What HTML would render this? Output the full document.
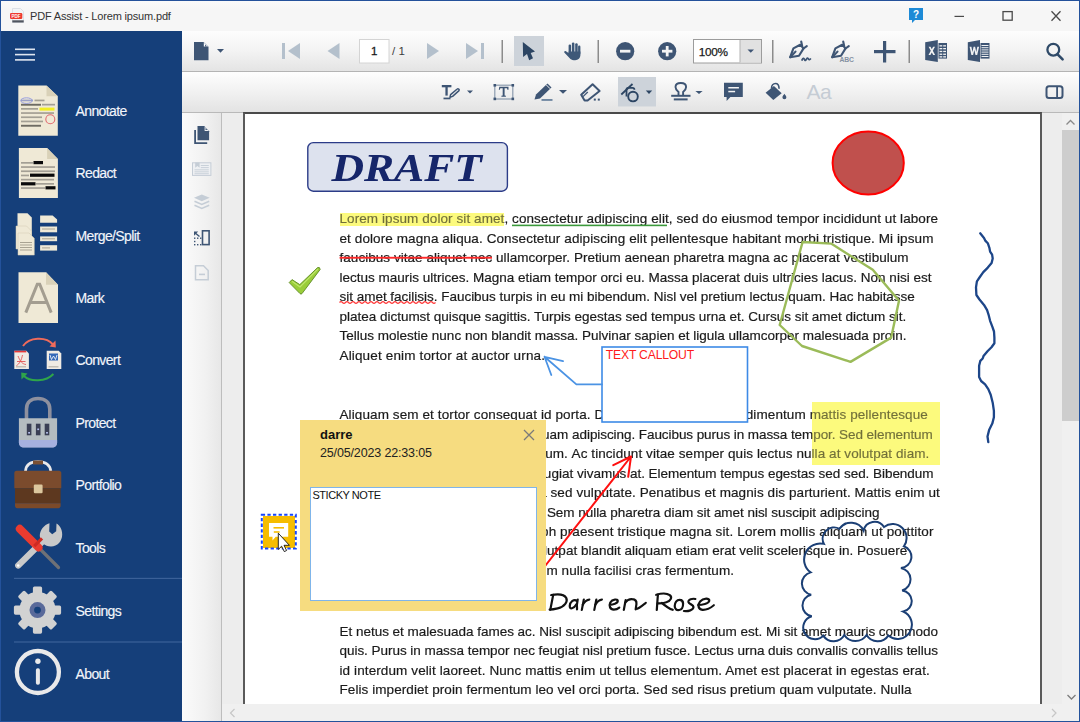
<!DOCTYPE html>
<html><head><meta charset="utf-8">
<style>
*{margin:0;padding:0;box-sizing:border-box}
html,body{width:1080px;height:722px;overflow:hidden;background:#fff;font-family:"Liberation Sans",sans-serif}
.a{position:absolute}
.tl{position:absolute;white-space:nowrap;font-size:13.5px;line-height:13.5px;color:#1a1a1a;-webkit-text-stroke:0.2px #1e1e1e}
.side{position:absolute;left:1px;top:31px;width:181px;height:690px;background:#153f7a}
.stx{position:absolute;left:75.5px;color:#f2f5fa;font-size:14px;line-height:14px;letter-spacing:-0.62px;white-space:nowrap;-webkit-text-stroke:0.15px #f2f5fa}
.tb1{position:absolute;left:182px;top:31px;width:897px;height:41px;background:linear-gradient(#fdfdfd,#f3f3f3 50%,#e4e4e4);border-bottom:1px solid #b4b4b4}
.tb2{position:absolute;left:182px;top:72px;width:897px;height:41px;background:linear-gradient(#fefefe,#f1f1f1 50%,#e3e3e3);border-bottom:1px solid #b9b9b9}
svg{position:absolute;overflow:visible}
</style></head><body>

<!-- title bar -->
<div class="a" style="left:1px;top:1px;width:1078px;height:30px;background:linear-gradient(#fafafa,#f6f6f6 30%,#f6f6f6)"></div>
<svg style="left:0;top:0" width="1080" height="31">
  <!-- app icon -->
  <path d="M12.5 8.5h8l3 3v11h-11z" fill="#f2f4f6" stroke="#d5dbe2" stroke-width="0.8"/>
  <rect x="10" y="13" width="12.3" height="6" rx="1.2" fill="#ee3b30"/>
  <text x="16" y="17.8" font-size="4.5" font-weight="bold" fill="#fff" text-anchor="middle" font-family="Liberation Sans">PDF</text>
  <rect x="12.3" y="20.3" width="11.4" height="2.2" fill="#50555f"/>
  <!-- help -->
  <path d="M909 8h14v12h-8l-3 3v-3h-3z" fill="#1d8ad6"/>
  <text x="916" y="18" font-size="10" font-weight="bold" fill="#fff" text-anchor="middle" font-family="Liberation Sans">?</text>
  <!-- minimize -->
  <rect x="954.5" y="15.8" width="9.5" height="1.2" fill="#4a4a4a"/>
  <!-- maximize -->
  <rect x="1003" y="11.6" width="9.2" height="8.6" fill="none" stroke="#4a4a4a" stroke-width="1.3"/>
  <!-- close -->
  <path d="M1051.5 11.3l9 9.5M1060.5 11.3l-9 9.5" stroke="#4a4a4a" stroke-width="1.3"/>
</svg>
<div class="a" style="left:30px;top:10.9px;font-size:11px;line-height:11px;color:#333;white-space:nowrap;letter-spacing:-0.17px">PDF Assist - Lorem ipsum.pdf</div>

<!-- sidebar -->
<div class="side"></div>
<svg style="left:0;top:0" width="182" height="722">
  <rect x="15" y="48.5" width="20" height="1.6" fill="#dfe6f0"/>
  <rect x="15" y="53.8" width="20" height="1.6" fill="#dfe6f0"/>
  <rect x="15" y="59.1" width="20" height="1.6" fill="#dfe6f0"/>
  <rect x="14" y="577.8" width="168" height="1.2" fill="#3a6098"/>
  <rect x="14" y="641.4" width="168" height="1.2" fill="#3a6098"/>
</svg>
<svg style="left:0;top:0" width="182" height="722">
  <!-- Annotate doc -->
  <path d="M18.3 85.4h28.2l11.3 10.8v39.5H18.3z" fill="#efe9d6"/>
  <path d="M46.5 85.4v10.8h11.3z" fill="#d9d1b8"/>
  <g fill="#a39f94">
    <rect x="21" y="99.6" width="12" height="1.7" fill="#9aa0c8"/><rect x="34.5" y="99.6" width="10" height="1.7"/>
    <rect x="21" y="103.8" width="20" height="1.9" fill="#6e6b63"/><rect x="42" y="103.8" width="13" height="1.7"/>
    <rect x="21" y="108" width="17" height="1.7"/><rect x="39.5" y="107.6" width="15" height="3" fill="#f2ee22"/>
    <rect x="21" y="112.2" width="33" height="1.7"/>
    <rect x="21" y="116.4" width="21" height="1.7"/>
    <rect x="21" y="120.6" width="22" height="1.7"/>
    <rect x="21" y="124.8" width="20" height="1.9" fill="#6e6b63"/>
  </g>
  <ellipse cx="26.5" cy="100.6" rx="5.8" ry="2.8" fill="none" stroke="#8d95e0" stroke-width="0.9"/>
  <circle cx="50.3" cy="119.3" r="4.5" fill="none" stroke="#e06a70" stroke-width="1.1"/>

  <!-- Redact doc -->
  <path d="M18.9 148.1h28.2l10.8 11v38.9H18.9z" fill="#efe9d6"/>
  <path d="M47.1 148.1v11h10.8z" fill="#d9d1b8"/>
  <g fill="#a39f94">
    <rect x="21" y="162" width="12" height="1.7"/><rect x="33.5" y="161" width="9.5" height="3.2" fill="#0a0a0a"/>
    <rect x="21" y="166.2" width="34" height="1.7"/>
    <rect x="21" y="170.4" width="34" height="1.7"/>
    <rect x="21" y="174.6" width="8" height="1.7"/><rect x="30" y="173.6" width="24.5" height="3.2" fill="#0a0a0a"/>
    <rect x="21" y="178.8" width="33" height="1.7"/>
    <rect x="21" y="182.2" width="14.5" height="3.2" fill="#0a0a0a"/><rect x="36" y="183" width="18" height="1.7"/>
    <rect x="21" y="187.2" width="24" height="1.7"/><rect x="45.5" y="186.2" width="10" height="3.2" fill="#0a0a0a"/>
  </g>

  <!-- Merge/Split -->
  <g fill="#efe9d6">
    <path d="M17.5 213.2h10l4.3 4.3v22H17.5z"/>
    <path d="M16 226h10.5l5 5v18H16z" stroke="#d0c8b0" stroke-width="0.5"/>
    <path d="M18 233h11l5.3 5.3v16.8H18z" stroke="#d0c8b0" stroke-width="0.5"/>
    <path d="M40.1 215.6h12.5l4.5 4v3.1h-17z"/>
    <rect x="40.1" y="226.5" width="17" height="5.8"/>
    <rect x="40.1" y="236.4" width="17" height="4.8"/>
    <rect x="40.1" y="245.2" width="17" height="5.4"/>
  </g>
  <g fill="#a9a393">
    <rect x="20" y="242" width="12" height="1"/><rect x="20" y="244.5" width="12" height="1"/>
    <rect x="20" y="247" width="12" height="1"/><rect x="20" y="249.5" width="12" height="1"/>
    <rect x="42" y="228.5" width="13" height="1"/><rect x="42" y="238.3" width="13" height="1"/>
    <rect x="42" y="247.4" width="8" height="1"/>
  </g>

  <!-- Mark -->
  <path d="M18.5 272.2h27.5l12 12.5v38.3H18.5z" fill="#efe9d6"/>
  <path d="M46 272.2v12.5h12z" fill="#d9d1b8"/>
  <path d="M25.8 312.6L37.3 284.3h2.4l11.5 28.3M29.8 302.6h17.4" fill="none" stroke="#a39d90" stroke-width="3"/>

  <!-- Convert -->
  <path d="M14.3 350.8h12l2.6 2.6v15.6H14.3z" fill="#f0ebe4"/>
  <rect x="14.3" y="350.8" width="12" height="1.6" fill="#e63a3a"/>
  <path d="M18 356c2 5 4 8 8 8.5M22.5 355c-1 5-3 9-6 10.5M17 361.5h8.5" fill="none" stroke="#e25555" stroke-width="0.9"/>
  <rect x="16" y="366.2" width="10" height="1.2" fill="#b9b3aa"/>
  <path d="M46.7 350.8h12l2.6 2.6v15.6H46.7z" fill="#f0ebe4"/>
  <rect x="49" y="353.5" width="9" height="7" fill="#3569b8"/>
  <path d="M50 355l1.5 4.5 2-3.5 2 3.5 1.5-4.5" fill="none" stroke="#fff" stroke-width="0.8"/>
  <rect x="48.5" y="366.2" width="10" height="1.2" fill="#b9b3aa"/>
  <path d="M23 346C29 337 46 336 53 344.5" fill="none" stroke="#ef6b5b" stroke-width="2"/>
  <path d="M49.5 346.5L55.5 340.5L55.8 347.5z" fill="#ef6b5b"/>
  <path d="M53.4 374C46 382 30 382 24 376" fill="none" stroke="#2fa54a" stroke-width="2"/>
  <path d="M27.5 373.5L21.5 379.5L21.2 372.5z" fill="#2fa54a"/>

  <!-- Protect lock -->
  <path d="M26.5 419V409C26.5 402 31.5 398.5 38 398.5S49.8 402 49.8 409V419" fill="none" stroke="#8e909e" stroke-width="3.6"/>
  <path d="M18.9 418.3h38.2v24c0 3-2 5-5 5H23.9c-3 0-5-2-5-5z" fill="#b4bcc0"/>
  <path d="M18.9 439.9h38.2v2.5c0 3-2 5-5 5H23.9c-3 0-5-2-5-5z" fill="#a6b1df"/>
  <g fill="#3a3f55">
    <rect x="26.8" y="423.7" width="4.6" height="11.6"/>
    <rect x="35.9" y="423.7" width="4.6" height="11.6"/>
    <rect x="44.7" y="423.7" width="4.6" height="11.6"/>
  </g>
  <g fill="#b8c2f0"><rect x="28.2" y="432" width="1.8" height="1.6"/><rect x="37.3" y="428.5" width="1.8" height="1.6"/><rect x="46.1" y="432" width="1.8" height="1.6"/></g>

  <!-- Portfolio -->
  <path d="M25.5 471C26 465 30 461.6 38 461.6S50 465 50.8 471" fill="none" stroke="#e8e8ea" stroke-width="2.8"/>
  <rect x="33" y="460.5" width="10" height="4" fill="#7a5034"/>
  <path d="M14.3 473c0-1.2 1-2.2 2.2-2.2h42.6c1.2 0 2.2 1 2.2 2.2v15.2H14.3z" fill="#7b4b2d"/>
  <rect x="15" y="488.2" width="45.6" height="15" fill="#5d381f"/>
  <path d="M15 503.2h45.6v2.8c0 1.2-1 2.2-2.2 2.2H17.2c-1.2 0-2.2-1-2.2-2.2z" fill="#7c4a2a"/>
  <rect x="33.8" y="484.5" width="8.8" height="8.7" rx="1.2" fill="#dcc79e"/>

  <!-- Tools -->
  <path d="M18.2 565.5L44.5 539.5" stroke="#c9c9c9" stroke-width="6.2" stroke-linecap="round"/>
  <path d="M49.5 523.2C44 524.8 39.8 530 39.8 535.8C39.8 542 45 546.5 51 546.5C57.5 546.5 62.2 541 62.2 534.5C62.2 529.5 59.8 525.6 56.5 523.6L56.2 531.2L52.2 534.2L49.2 531.5z" fill="#c9c9c9"/>
  <circle cx="18.2" cy="565.5" r="1.3" fill="#fff"/>
  <path d="M40.5 549.5L58.5 567.5" stroke="#6f7176" stroke-width="3.2" stroke-linecap="round"/>
  <path d="M19.8 528.8L38.5 547.5" stroke="#ea3b2f" stroke-width="8" stroke-linecap="round"/>
  <path d="M34.2 546.2L42 538.4" stroke="#cf2a22" stroke-width="3.2"/>

  <!-- Settings gear -->
  <g transform="translate(37.5 610.1)" fill="#d2d2d2">
    <circle r="18.2"/>
    <rect x="-4.6" y="-23.6" width="9.2" height="9" rx="1.6" transform="rotate(0)"/><rect x="-4.6" y="-23.6" width="9.2" height="9" rx="1.6" transform="rotate(45)"/><rect x="-4.6" y="-23.6" width="9.2" height="9" rx="1.6" transform="rotate(90)"/><rect x="-4.6" y="-23.6" width="9.2" height="9" rx="1.6" transform="rotate(135)"/><rect x="-4.6" y="-23.6" width="9.2" height="9" rx="1.6" transform="rotate(180)"/><rect x="-4.6" y="-23.6" width="9.2" height="9" rx="1.6" transform="rotate(225)"/><rect x="-4.6" y="-23.6" width="9.2" height="9" rx="1.6" transform="rotate(270)"/><rect x="-4.6" y="-23.6" width="9.2" height="9" rx="1.6" transform="rotate(315)"/>
    <circle r="8" fill="#59699a"/>
    <circle r="3.4" fill="#153f7a"/>
  </g>

  <!-- About -->
  <circle cx="37.9" cy="672" r="21" fill="none" stroke="#e9e9ea" stroke-width="4.3"/>
  <circle cx="37.9" cy="661.3" r="2.7" fill="#e9e9ea"/>
  <rect x="35.9" y="668.2" width="4" height="16.6" rx="1.8" fill="#e9e9ea"/>
</svg>

<div class="stx" style="top:103.9px">Annotate</div>
<div class="stx" style="top:166.2px">Redact</div>
<div class="stx" style="top:228.6px">Merge/Split</div>
<div class="stx" style="top:291px">Mark</div>
<div class="stx" style="top:353.4px">Convert</div>
<div class="stx" style="top:415.8px">Protect</div>
<div class="stx" style="top:478.2px">Portfolio</div>
<div class="stx" style="top:540.6px">Tools</div>
<div class="stx" style="top:603.6px">Settings</div>
<div class="stx" style="top:666.6px">About</div>

<!-- toolbars -->
<div class="tb1"></div>
<div class="tb2"></div>
<svg style="left:0;top:0" width="1080" height="113">
<g fill="#3e5574" stroke="none">
  <!-- doc -->
  <path d="M194 42h9.5l5 4.8V60.2H194z"/>
  <path d="M203.8 42.4v4.2h4.2z" fill="#fff"/>
  <path d="M205 44.5l2 2h-2z" fill="#3e5574"/>
  <path d="M217 49h7l-3.5 3.8z"/>
  <!-- first/prev (disabled) -->
  <g fill="#b4c0cc">
    <rect x="282" y="43" width="3" height="16"/>
    <path d="M300 43v16l-12-8z"/>
    <path d="M339.5 43v16l-12-8z"/>
    <path d="M427 43v16l12-8z"/>
    <path d="M466 43v16l12-8z"/>
    <rect x="481" y="43" width="3" height="16"/>
  </g>
  <!-- separators -->
  <rect x="501.5" y="40" width="1.5" height="23" fill="#8c8c8c"/>
  <rect x="597.5" y="40" width="1.5" height="23" fill="#8c8c8c"/>
  <rect x="772" y="40" width="1.5" height="23" fill="#8c8c8c"/>
  <rect x="908.5" y="40" width="1.5" height="23" fill="#8c8c8c"/>
  <!-- select highlight -->
  <rect x="514" y="36" width="30" height="30" fill="#cdd3da"/>
  <path d="M522.8 42L523.1 57L527 54L529.2 60.2L533 58.2L530.7 53L535 51.5z" fill="#2c4563"/>
  <!-- hand -->
  <g fill="#3e5878">
    <rect x="568.6" y="44.6" width="2.5" height="10" rx="1.2"/>
    <rect x="571.9" y="42.4" width="2.5" height="11" rx="1.2"/>
    <rect x="575.2" y="43.2" width="2.5" height="11" rx="1.2"/>
    <rect x="578.1" y="45.6" width="2.3" height="9" rx="1.1"/>
    <path d="M568.6 51.5h11.8v3.5c0 3-2.2 5.2-5.2 5.2h-1.5c-1.8 0-3-.8-4.2-2.2l-5-5.2c-.9-1 .3-2.3 1.4-1.6l2.7 1.8z"/>
  </g>
  <!-- minus/plus circles -->
  <circle cx="625.2" cy="51.2" r="9.1"/>
  <rect x="620" y="49.8" width="10.4" height="2.8" fill="#f4f4f4"/>
  <circle cx="667.2" cy="51.2" r="9.1"/>
  <rect x="662" y="49.8" width="10.4" height="2.8" fill="#f4f4f4"/>
  <rect x="665.8" y="46" width="2.8" height="10.4" fill="#f4f4f4"/>
  <!-- big plus -->
  <rect x="874" y="50" width="21.5" height="3.2"/>
  <rect x="883" y="41" width="3.2" height="21.5"/>
  <!-- excel -->
  <path d="M925.2 42.3L937.8 40.1V62L925.2 60.1z"/>
  <path d="M938.5 43h8.5v15.6h-8.5z"/>
  <g fill="#f2f2f2">
    <rect x="939.5" y="45.2" width="2.8" height="1.3"/><rect x="943.2" y="45.2" width="2.8" height="1.3"/>
    <rect x="939.5" y="48" width="2.8" height="1.3"/><rect x="943.2" y="48" width="2.8" height="1.3"/>
    <rect x="939.5" y="50.8" width="2.8" height="1.3"/><rect x="943.2" y="50.8" width="2.8" height="1.3"/>
    <rect x="939.5" y="53.6" width="2.8" height="1.3"/><rect x="943.2" y="53.6" width="2.8" height="1.3"/>
    <rect x="939.5" y="56.2" width="2.8" height="1.3"/><rect x="943.2" y="56.2" width="2.8" height="1.3"/>
  </g>
  <path d="M928.6 46.8h1.9l1.3 2.5 1.3-2.5h1.9l-2.2 4 2.3 4.3h-1.9l-1.4-2.7-1.4 2.7h-1.9l2.3-4.3z" fill="#f2f2f2"/>
  <!-- word -->
  <path d="M967.8 42.3L980 40.1V62L967.8 60z"/>
  <path d="M980.5 43h9v15.6h-9z"/>
  <g fill="#eef0f2">
    <rect x="981.5" y="45" width="7" height="1"/><rect x="981.5" y="47.2" width="7" height="1"/>
    <rect x="981.5" y="49.4" width="7" height="1"/><rect x="981.5" y="51.6" width="7" height="1"/>
    <rect x="981.5" y="53.8" width="7" height="1"/><rect x="981.5" y="56" width="7" height="1"/>
  </g>
  <path d="M969.6 46.8h1.8l1 5.2 1.2-5.2h1.5l1.2 5.2 1-5.2h1.8l-1.9 8.3h-1.7l-1.2-5-1.2 5h-1.7z" fill="#eef0f2"/>
  <!-- search -->
  <circle cx="1053.3" cy="49.7" r="5.9" fill="none" stroke="#2f4a68" stroke-width="2.3"/>
  <path d="M1057.6 54.3l5 5" stroke="#2f4a68" stroke-width="2.6" stroke-linecap="round"/>
</g>
<!-- page box -->
<rect x="359.5" y="39.5" width="29.5" height="23.5" fill="#fff" stroke="#d4d4d4"/>
<text x="374.2" y="55.2" font-size="11.5" fill="#1a1a1a" text-anchor="middle" font-family="Liberation Sans" stroke="#1a1a1a" stroke-width="0.3">1</text>
<text x="392" y="55.2" font-size="11.5" fill="#3c3c3c" font-family="Liberation Sans">/ 1</text>
<!-- zoom combo -->
<rect x="693.5" y="39.5" width="68" height="23.5" fill="#fff" stroke="#9c9c9c"/>
<rect x="740" y="40" width="21" height="22.5" fill="#e1e1e1"/>
<rect x="739.5" y="40" width="1" height="22.5" fill="#b4b4b4"/>
<path d="M747.5 49.5h6.5l-3.25 3.3z" fill="#3e5574"/>
<text x="698.8" y="55.6" font-size="11.8" fill="#1a1a1a" font-family="Liberation Sans" letter-spacing="-0.3" stroke="#1a1a1a" stroke-width="0.25">100%</text>
<!-- pen sign 1 -->
<g fill="none" stroke="#3e5574" stroke-width="2.1" stroke-linejoin="round" stroke-linecap="round">
  <path d="M790.2 57.2L793.4 48.4L800.2 44.8L803.6 48.4L799 55.8z"/>
  <path d="M790.2 57.2L795.5 51.6"/>
  <path d="M801.2 41.5L802.2 46.2M806.8 46.2L802.8 49"/>
  <path d="M802 60c1-2 2-2 2.5-.5s1.5 1 2-.5 1.5-1 2 0 1.5.5 2 0" stroke-width="1.7"/>
  <path d="M832.2 57.2L835.4 48.4L842.2 44.8L845.6 48.4L841 55.8z"/>
  <path d="M832.2 57.2L837.5 51.6"/>
  <path d="M843.2 41.5L844.2 46.2M848.8 46.2L844.8 49"/>
</g>
<text x="839.6" y="61.8" font-size="6.8" font-weight="bold" fill="#8592a2" font-family="Liberation Sans" letter-spacing="-0.2">ABC</text>

<!-- ===== toolbar 2 ===== -->
<g fill="#3e5574" stroke="none">
  <!-- T pen -->
  <rect x="441.8" y="85" width="9.6" height="2.3"/>
  <rect x="445.4" y="85" width="2.3" height="10.6"/>
  <rect x="443.5" y="97.6" width="7" height="1.7"/>
  <path d="M450 97.2l.6-2.6 6.6-5.6c.9-.8 2.6.6 1.8 1.6l-6.4 5.8z" fill="none" stroke="#3e5574" stroke-width="1.5" stroke-linejoin="round"/>
  <path d="M467 90.5h6l-3 3z"/>
  <!-- text box -->
  <rect x="494.8" y="85.2" width="18" height="13.8" fill="none" stroke="#8c9cae" stroke-width="1.2"/>
  <rect x="493.5" y="84" width="2.6" height="2.6"/><rect x="511.5" y="84" width="2.6" height="2.6"/>
  <rect x="493.5" y="97.6" width="2.6" height="2.6"/><rect x="511.5" y="97.6" width="2.6" height="2.6"/>
  <path d="M499.3 86.8h9.2v3h-1.1l-.4-1.6h-2.4v7.2l1.3.4v1h-4.5v-1l1.3-.4v-7.2h-2.4l-.4 1.6h-1.1z"/>
  <!-- pencil -->
  <path d="M534.5 99.6L536 94.5L547.5 83.5L551.5 87.5L540 98.5z"/>
  <path d="M546.2 84.8L550.2 88.8" stroke="#f2f2f2" stroke-width="1"/>
  <rect x="541.5" y="99" width="11" height="1.9" fill="#7088a2"/>
  <path d="M559 90h8l-4 3.8z"/>
  <!-- eraser -->
  <path d="M581.2 94.8L592.6 84.2L599.6 91L587.6 100.5L584.6 100.5z" fill="none" stroke="#3e5574" stroke-width="2" stroke-linejoin="round"/>
  <path d="M583 96.6L587.8 92" stroke="#3e5574" stroke-width="1.3"/>
  <rect x="593.8" y="98.6" width="2" height="2"/><rect x="597.8" y="98.6" width="2" height="2"/>
  <!-- shape highlight -->
  <rect x="618" y="77" width="38" height="29.5" fill="#cdd3da"/>
  <path d="M621.3 94.5L632.5 84" stroke="#2c4563" stroke-width="1.8" fill="none"/>
  <path d="M626.5 96.5V89.5c0-1 .8-1.6 1.6-1.6h4.5c1 0 1.8.8 1.8 1.8" stroke="#2c4563" stroke-width="1.8" fill="none"/>
  <circle cx="633" cy="96.6" r="4.8" fill="#cdd3da" stroke="#2c4563" stroke-width="1.9"/>
  <path d="M645.8 90.5h6.4l-3.2 3.4z" fill="#2c4563"/>
  <!-- stamp -->
  <path d="M678.5 95V92c-2-1.6-3-3.2-3-5c0-2.8 2.4-4 5.3-4s5.3 1.2 5.3 4c0 1.8-1 3.4-3 5v3" fill="none" stroke="#3e5574" stroke-width="1.9"/>
  <rect x="671.2" y="94.8" width="19.3" height="2"/>
  <rect x="673.8" y="98.4" width="13.8" height="2"/>
  <path d="M695.4 90.9h7.2l-3.6 3z"/>
  <!-- comment -->
  <path d="M724 82.7h18.8v14.4h-12.4l-3.8 3.9v-3.9h-2.6z"/>
  <rect x="728.3" y="87" width="10.6" height="1.5" fill="#f4f4f4"/>
  <rect x="728.3" y="90.8" width="6.8" height="1.5" fill="#f4f4f4"/>
  <!-- fill bucket -->
  <path d="M765.6 92.7L773.9 86L781.7 93.2L773.3 99.9z"/>
  <path d="M771.5 88.5c0-3 1.8-5 4-5s3.5 2.5 3.6 5.2" fill="none" stroke="#3e5574" stroke-width="1.6"/>
  <path d="M784.4 93.8c.8 1.2 2 2.5 2 3.4a2 2 0 0 1-4 0c0-.9 1.2-2.2 2-3.4z"/>
  <!-- panel toggle -->
  <rect x="1046.5" y="86.2" width="16" height="11.8" rx="2.5" fill="none" stroke="#3e5574" stroke-width="2"/>
  <rect x="1056.2" y="86.5" width="1.8" height="11.2"/>
</g>
<text x="806.5" y="99.3" font-size="21" fill="#c5ccd4" font-family="Liberation Sans" letter-spacing="-0.5">Aa</text>
</svg>


<!-- left panel -->
<div class="a" style="left:182px;top:113px;width:39px;height:608px;background:linear-gradient(90deg,#fbfbfb,#f1f1f1 60%,#e7e7e7)"></div>
<div class="a" style="left:221px;top:113px;width:1px;height:608px;background:#bdbdbd"></div>
<div class="a" style="left:222px;top:113px;width:857px;height:608px;background:#ededed"></div>
<svg style="left:0;top:0" width="222" height="300">
  <!-- pages -->
  <path d="M197.5 126h6.8l4.8 5.2v9.1h-11.6z" fill="#3e5574"/>
  <path d="M204.6 126.4v4.6h4.2z" fill="#eef0f2"/>
  <path d="M205.5 128l2 2h-2z" fill="#3e5574"/>
  <path d="M194.2 130h1.8v12.3h11.2v1.6h-13z" fill="#3e5574"/>
  <!-- bookmark card (disabled) -->
  <rect x="192.5" y="162.8" width="18.4" height="12.6" fill="#eef0f3" stroke="#c5cdd6" stroke-width="1"/>
  <path d="M195.2 162.5h4.4v5.2l-2.2-1.6-2.2 1.6z" fill="#c5cdd6"/>
  <g fill="#c5cdd6">
    <rect x="200.8" y="165" width="8" height="0.9"/>
    <rect x="200.8" y="167.2" width="8" height="0.9"/>
    <rect x="194.5" y="169.4" width="14.3" height="0.9"/>
    <rect x="194.5" y="171.4" width="14.3" height="0.9"/>
    <rect x="194.5" y="173.3" width="14.3" height="0.9"/>
  </g>
  <!-- layers (disabled) -->
  <path d="M194 197.8L201.8 194.5L209.7 197.8L201.8 201.2z" fill="#c5cdd6"/>
  <path d="M194.5 201.2L201.8 204.4L209.2 201.2" fill="none" stroke="#c5cdd6" stroke-width="1.6"/>
  <path d="M194.5 205.2L201.8 208.4L209.2 205.2" fill="none" stroke="#c5cdd6" stroke-width="1.6"/>
  <!-- crop -->
  <rect x="202.5" y="230.8" width="6.6" height="13.8" fill="none" stroke="#3e5574" stroke-width="1.6"/>
  <path d="M194.5 232.5l5 4" stroke="#3e5574" stroke-width="1.5"/>
  <path d="M194 231.5h4.2l-4.2 4.2z" fill="#3e5574"/>
  <g fill="#3e5574">
    <rect x="194" y="237.5" width="1.4" height="1.4"/><rect x="197" y="237.5" width="1.4" height="1.4"/><rect x="200" y="237.5" width="1.4" height="1.4"/>
    <rect x="194" y="240.8" width="1.4" height="1.4"/>
    <rect x="194" y="244" width="1.4" height="1.4"/><rect x="197" y="244" width="1.4" height="1.4"/><rect x="200" y="244" width="1.4" height="1.4"/>
  </g>
  <!-- page minus (disabled) -->
  <path d="M195.5 265.8h8l4.7 4.7v9.2h-12.7z" fill="none" stroke="#c5cdd6" stroke-width="1.5"/>
  <rect x="199" y="273.6" width="6" height="1.6" fill="#c5cdd6"/>
</svg>


<!-- page -->
<div class="a" style="left:243px;top:112px;width:799px;height:592px;background:#fff;border-left:2px solid #5a5a5a;border-top:2px solid #4a4a4a;border-right:2px solid #5a5a5a"></div>
<div id="doc" class="a" style="left:0;top:0;width:1080px;height:722px;overflow:hidden;clip-path:inset(114px 39px 18px 245px)">
<div class="tl" style="left:339.5px;top:212.47px;letter-spacing:0.081px">Lorem ipsum dolor sit amet, consectetur adipiscing elit, sed do eiusmod tempor incididunt ut labore</div>
<div class="tl" style="left:339.5px;top:231.91px;letter-spacing:0.095px">et dolore magna aliqua. Consectetur adipiscing elit pellentesque habitant morbi tristique. Mi ipsum</div>
<div class="tl" style="left:339.5px;top:251.35px;letter-spacing:0.044px">faucibus vitae aliquet nec ullamcorper. Pretium aenean pharetra magna ac placerat vestibulum</div>
<div class="tl" style="left:339.5px;top:270.79px;letter-spacing:-0.001px">lectus mauris ultrices. Magna etiam tempor orci eu. Massa placerat duis ultricies lacus. Non nisi est</div>
<div class="tl" style="left:339.5px;top:290.23px;letter-spacing:-0.017px">sit amet facilisis. Faucibus turpis in eu mi bibendum. Nisl vel pretium lectus quam. Hac habitasse</div>
<div class="tl" style="left:339.5px;top:309.67px;letter-spacing:-0.014px">platea dictumst quisque sagittis. Turpis egestas sed tempus urna et. Cursus sit amet dictum sit.</div>
<div class="tl" style="left:339.5px;top:329.11px;letter-spacing:0.004px">Tellus molestie nunc non blandit massa. Pulvinar sapien et ligula ullamcorper malesuada proin.</div>
<div class="tl" style="left:339.5px;top:348.55px;letter-spacing:0.151px">Aliquet enim tortor at auctor urna.</div>
<div class="tl" style="left:339.5px;top:408.37px;letter-spacing:0.103px">Aliquam sem et tortor consequat id porta. Duis at tellus at urna condimentum mattis pellentesque</div>
<div class="tl" style="left:572.1px;top:427.81px;letter-spacing:-0.071px">adipiscing. Faucibus purus in massa tempor. Sed elementum</div>
<div class="tl" style="left:571.6px;top:447.25px;letter-spacing:0.071px">Ac tincidunt vitae semper quis lectus nulla at volutpat diam.</div>
<div class="tl" style="left:577.1px;top:466.69px;letter-spacing:-0.043px">vivamus at. Elementum tempus egestas sed sed. Bibendum</div>
<div class="tl" style="left:550.5px;top:486.13px;letter-spacing:0.091px">sed vulputate. Penatibus et magnis dis parturient. Mattis enim ut</div>
<div class="tl" style="left:546.9px;top:505.57px;letter-spacing:-0.038px">Sem nulla pharetra diam sit amet nisl suscipit adipiscing</div>
<div class="tl" style="left:560.0px;top:525.01px;letter-spacing:0.130px">praesent tristique magna sit. Lorem mollis aliquam ut porttitor</div>
<div class="tl" style="left:581.0px;top:544.45px;letter-spacing:-0.002px">blandit aliquam etiam erat velit scelerisque in. Posuere</div>
<div class="tl" style="left:561.6px;top:563.89px;letter-spacing:0.072px">nulla facilisi cras fermentum.</div>
<div class="tl" style="left:339.5px;top:624.77px;letter-spacing:-0.018px">Et netus et malesuada fames ac. Nisl suscipit adipiscing bibendum est. Mi sit amet mauris commodo</div>
<div class="tl" style="left:339.5px;top:644.21px;letter-spacing:-0.040px">quis. Purus in massa tempor nec feugiat nisl pretium fusce. Lectus urna duis convallis convallis tellus</div>
<div class="tl" style="left:339.5px;top:663.65px;letter-spacing:0.105px">id interdum velit laoreet. Nunc mattis enim ut tellus elementum. Amet est placerat in egestas erat.</div>
<div class="tl" style="left:339.5px;top:683.09px;letter-spacing:0.074px">Felis imperdiet proin fermentum leo vel orci porta. Sed sed risus pretium quam vulputate. Nulla</div>
<div class="tl" style="left:339.5px;top:702.53px;letter-spacing:-0.179px">facilisis magna etiam tempor orci eu lobortis elementum nibh tellus molestie nunc non blandit massa</div>
<div class="a" style="left:0;top:0;width:1080px;height:722px;clip-path:inset(0 0 0 339px)">
<div class="tl" style="left:534.4px;top:427.81px;letter-spacing:0.05px">quam </div>
<div class="tl" style="left:527.8px;top:447.25px;letter-spacing:0.05px">ipsum. </div>
<div class="tl" style="left:532.5px;top:466.69px;letter-spacing:0.05px">feugiat </div>
<div class="tl" style="left:499.8px;top:486.13px;letter-spacing:0.05px">ac nulla </div>
<div class="tl" style="left:502.3px;top:505.57px;letter-spacing:0.05px">auctor. </div>
<div class="tl" style="left:530.5px;top:525.01px;letter-spacing:0.05px">nibh </div>
<div class="tl" style="left:529.6px;top:544.45px;letter-spacing:0.05px">volutpat </div>
<div class="tl" style="left:521.6px;top:563.89px;letter-spacing:0.05px">ipsum </div>
</div>
<!-- highlights -->
<div class="a" style="left:339.9px;top:213px;width:164.1px;height:12.7px;background:rgb(252,250,125);mix-blend-mode:multiply"></div><div class="a" style="left:339.9px;top:213px;width:164.1px;height:12.7px;background:rgba(252,250,125,0.38)"></div>
<div class="a" style="left:811.5px;top:401.7px;width:128.5px;height:63.7px;background:rgb(252,250,125);mix-blend-mode:multiply"></div><div class="a" style="left:811.5px;top:401.7px;width:128.5px;height:63.7px;background:rgba(252,250,125,0.38)"></div>
<svg style="left:0;top:0" width="1080" height="722">
  <!-- DRAFT stamp -->
  <rect x="307.8" y="142.6" width="199.6" height="48.6" rx="5.5" fill="#dde2ee" stroke="#2c3c88" stroke-width="1.4"/>
  <text transform="translate(331.5 180.6) scale(1.1 1)" x="0" y="0" font-family="Liberation Serif" font-style="italic" font-weight="bold" font-size="41" fill="#16266a">DRAFT</text>
  <!-- red ellipse -->
  <ellipse cx="868.2" cy="163.1" rx="35.6" ry="31.5" fill="#c0504d" stroke="#ff0000" stroke-width="2"/>
  <!-- checkmark -->
  <path d="M289.2 282.6L292 279.6L299.8 284.6L317.6 267.6Q319.8 266.6 320.2 269.4L302 293.6Q301 294.6 300 293.6z" fill="#9acd3a" stroke="#5d8a25" stroke-width="0.9" stroke-linejoin="round"/>
  <path d="M292 281.2L300 287L317.8 269.2" fill="none" stroke="#c8ec7a" stroke-width="1.1" opacity="0.8"/>
  <!-- green underline -->
  <rect x="512" y="224.6" width="155" height="1.6" fill="#3c9a3c"/>
  <!-- strike -->
  <rect x="339.6" y="256.8" width="152.4" height="1.9" fill="#ff2b2b"/>
  <!-- squiggle -->
  <path d="M339.5 302.5 q1.5 -1.6 3 0 t3 0 t3 0 t3 0 t3 0 t3 0 t3 0 t3 0 t3 0 t3 0 t3 0 t3 0 t3 0 t3 0 t3 0 t3 0 t3 0 t3 0 t3 0 t3 0 t3 0 t3 0 t3 0 t3 0 t3 0 t3 0 t3 0 t3 0 t3 0 t3 0 t3 0 t3 0" fill="none" stroke="#ff3b3b" stroke-width="1.2"/>
  <!-- green polygon -->
  <path d="M802.6 242L831.1 243.6L872.8 269.8L899 300.8L891.2 337.6L850.5 361.9L802 346L779.7 325z" fill="none" stroke="#9bbb59" stroke-width="2.4" stroke-linejoin="round"/>
  <!-- blue freehand -->
  <path d="M980.2 233.3 L984 237.9 L985.5 240.9 L987.8 243.2 L989.4 247.8 L990.1 251.6 L992.1 254.6 L992.7 258.4 L991.6 263 L987.8 267.6 L983.3 272.1 L979.5 277.5 L976.9 281.3 L976 287.4 L976.4 295 L979.5 299.5 L984 304.9 L987.1 310.2 L988.6 314.8 L990.1 320.8 L992.4 326.9 L994 331.5 L994.4 337.6 L994.4 343.3 L991.5 347.3 L987.5 351.3 L983.5 356.1 L982.7 358.5 L980.3 360.9 L979.1 365.8 L979.1 377 L981.1 381 L985.1 384.3 L988.3 389.1 L990.7 394.7 L992.7 402.7 L993.9 410.8 L993.9 417.2 L992.3 423.6 L989.1 430.1 L987.5 436.5 L988.3 442.1" stroke-linejoin="round" fill="none" stroke="#1d4689" stroke-width="2.3" stroke-linecap="round"/>
  <!-- callout -->
  <rect x="602" y="347" width="145.5" height="75" fill="#fff" stroke="#3d8ae6" stroke-width="1.6"/>
  <path d="M602 384.4H576.4L544.5 356.8M544.5 356.8L563 361.2M544.5 356.8L551.3 375" fill="none" stroke="#4b93e4" stroke-width="1.8" stroke-linecap="round"/>
  <text x="605.8" y="358.8" font-family="Liberation Sans" font-size="12.2" fill="#ff1a1a" letter-spacing="-0.2">TEXT CALLOUT</text>
  <!-- red arrow -->
  <path d="M520 598L631 456.5M631 456.5L613.3 465.2M631 456.5L628.2 476.8" fill="none" stroke="#ff1010" stroke-width="2" stroke-linecap="round"/>
  <!-- cloud -->
  <path d="M823.9 543.9 A11.37 11.37 0 0 1 839.5 528.8 A13.93 13.93 0 0 1 863.6 530.6 A11.16 11.16 0 0 1 884 527 A14.00 14.00 0 0 1 903.9 546.3 A11.17 11.17 0 0 1 900.9 568 A11.55 11.55 0 0 1 902.1 590.5 A10.64 10.64 0 0 1 903.3 611.5 A14.34 14.34 0 1 1 888.3 635.6 A12.82 12.82 0 0 1 866.6 635 A13.36 13.36 0 0 1 844.3 635 A12.20 12.20 0 0 1 823.3 635.6 A11.65 11.65 0 1 1 811.8 616.3 A10.98 10.98 0 0 1 811.2 594.7 A11.41 11.41 0 0 1 810.6 572.4 A16.05 16.05 0 0 1 823.9 543.9z" fill="none" stroke="#1b3f75" stroke-width="2"/>
  <!-- signature -->
  <g fill="none" stroke="#111" stroke-width="2.2" stroke-linecap="round" stroke-linejoin="round" transform="translate(0 610) skewX(-6) translate(0 -610)">
    <path d="M551.6 594.8L550.3 609.6"/>
    <path d="M549.6 595C556 593.8 562.5 594.2 565 598C567 601.5 564.5 606.5 557.5 608.4C554.5 609.2 552 609.6 549.6 609.6"/>
    <path d="M575.8 600.8C572.5 599 569 602 569.3 606C569.6 609.8 573.5 609 576 604"/>
    <path d="M576.6 599.6C576.2 603 576.2 606.5 577 609.4"/>
    <path d="M582.7 599.6L581.8 610"/>
    <path d="M582.2 604.8C583.6 601.6 585.6 599.8 588.2 599.6"/>
    <path d="M595.2 599.6L594.3 610"/>
    <path d="M594.8 604.8C596.2 601.6 598.2 599.8 600.8 599.6"/>
    <path d="M609.2 604.8C612.5 604.8 617 603.4 616.8 601C616.5 598.8 611.2 598.8 609.5 602.5C608.2 606 610.2 609.6 613.8 609.6C616 609.6 618 608.6 619 607.6"/>
    <path d="M624.6 600.2L623.8 609.8"/>
    <path d="M624.4 602.6C626 600.2 628.5 599 631 599.2C634.5 599.4 635.8 601 635.8 604L635.6 609.4M635.8 609C639 608.6 642.5 605 645 602.8"/>
    <path d="M656.3 594.5C656.4 600 656.6 605 656.8 610"/>
    <path d="M654.6 594.8C659 593.4 665 593 668.2 595.2C671 597.2 670.2 600.6 665.5 602.2C662.5 603.2 659 603.5 657 603.4"/>
    <path d="M661 602.8C664.5 605.5 668.5 608.5 672.7 609.8"/>
    <path d="M678.8 599.8C675.5 599.6 674 603 674.3 606C674.6 609 676.8 610.4 679.2 610C681.8 609.5 682.8 606.5 682.4 603.5C682 601 680.5 599.8 678.8 599.8"/>
    <path d="M694.2 599C691 598.2 687 599.5 687.6 602C688.2 604.2 693 604.5 693.2 607.2C693.4 610 688.5 611.6 684 611"/>
    <path d="M697.5 605C701.5 605 708 603.6 708.3 600.8C708.5 598 702 597.8 699.2 601.5C697 604.5 697.8 609.4 702.5 609.8C706.5 610 710.5 607.8 713.3 605.2"/>
  </g>
</svg>

</div>
<!-- sticky note icon -->
<svg style="left:0;top:0" width="1080" height="722">
  <rect x="263" y="516" width="32" height="32" fill="#f6bd00"/>
  <rect x="261.8" y="514.7" width="34" height="33.7" fill="none" stroke="#1446ff" stroke-width="2" stroke-dasharray="3.3 2.3"/>
  <path d="M269 523h19.2v13.7h-12.5l-3.2 3.8v-3.8H269z" fill="#fff"/>
  <rect x="273.5" y="527" width="10.5" height="1.6" fill="#f6bd00"/>
  <rect x="273.8" y="531.2" width="5.8" height="1.6" fill="#f6bd00"/>
  <path d="M278.3 533.2V549.4L281.6 546.2L284.3 551.6L286.6 550.5L284 545.3H289.4z" fill="#fff" stroke="#111" stroke-width="0.9" stroke-linejoin="round"/>
</svg>
<!-- sticky note popup -->
<div class="a" style="left:300px;top:420.3px;width:246px;height:190.5px;background:#f6dc80"></div>
<div class="a" style="left:320px;top:427.5px;font-size:13px;line-height:13px;font-weight:bold;color:#111;white-space:nowrap">darre</div>
<div class="a" style="left:320px;top:446.5px;font-size:12.5px;line-height:12.5px;color:#222;white-space:nowrap;letter-spacing:-0.15px">25/05/2023 22:33:05</div>
<svg style="left:0;top:0" width="1080" height="722">
  <path d="M524 430l10 10M534 430l-10 10" stroke="#7a7a7a" stroke-width="1.3"/>
</svg>
<div class="a" style="left:309.7px;top:486.8px;width:227.5px;height:114.3px;background:#fff;border:1px solid #7fb5ea"></div>
<div class="a" style="left:312.4px;top:489.6px;font-size:11px;line-height:11px;color:#111;white-space:nowrap;letter-spacing:-0.45px">STICKY NOTE</div>


<!-- scrollbars -->
<div class="a" style="left:1062px;top:113px;width:17px;height:608px;background:#f0f0f0"></div>
<div class="a" style="left:1062px;top:130px;width:17px;height:291px;background:#cdcdcd"></div>
<div class="a" style="left:222px;top:704px;width:857px;height:17px;background:#f0f0f0"></div>
<svg style="left:0;top:0" width="1080" height="722">
  <path d="M1066.5 124.5l4-4 4 4" fill="none" stroke="#8a8a8a" stroke-width="1.3"/>
  <path d="M1067.5 695l4 4 4-4" fill="none" stroke="#7d7d7d" stroke-width="1.3"/>
  <path d="M234.5 709l-4 4 4 4" fill="none" stroke="#c6c6c6" stroke-width="1.2"/>
  <path d="M1052 709l4 4-4 4" fill="none" stroke="#c6c6c6" stroke-width="1.2"/>
</svg>

<!-- window border -->
<div class="a" style="left:0;top:0;width:1080px;height:722px;border:1px solid #24529b;pointer-events:none"></div>
</body></html>
